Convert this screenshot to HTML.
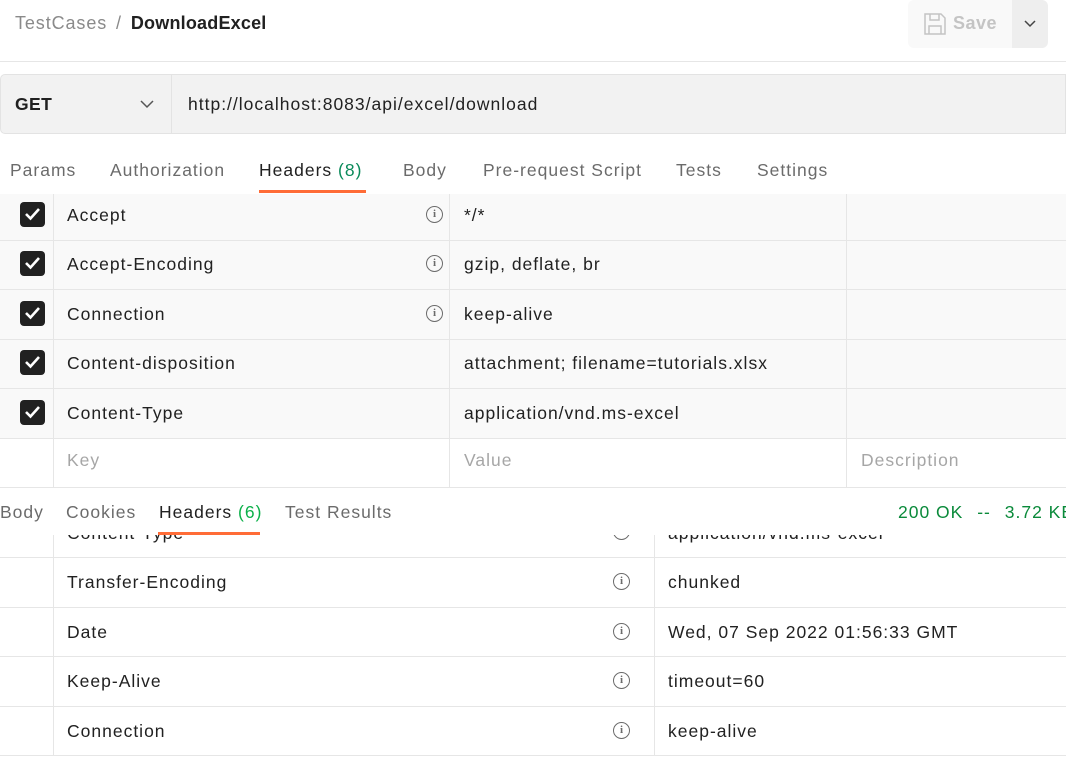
<!DOCTYPE html>
<html><head><style>
*{margin:0;padding:0;box-sizing:border-box}
body{width:1066px;height:775px;overflow:hidden;background:#fff;font-family:"Liberation Sans",sans-serif;color:#212121;font-size:17.5px;letter-spacing:1px;position:relative}
.a{position:absolute;white-space:nowrap}
.g{color:#6b6b6b}
.hl{position:absolute;left:0;width:1066px;height:1px;background:#e6e6e6}
.vl{position:absolute;width:1px;background:#e6e6e6}
.cb{position:absolute;left:20px;width:25px;height:25px;background:#212121;border-radius:4px}
.cb svg{position:absolute;left:4px;top:5px}
.inf{position:absolute;width:17px;height:17px;border:1.5px solid #6b6b6b;border-radius:50%;font-size:11px;line-height:14px;text-align:center;color:#6b6b6b;font-family:"Liberation Serif",serif;font-weight:bold;letter-spacing:0}
</style></head><body>
<div class="a" style="left:15px;top:13px;font-size:18px;color:#8a8a8a;letter-spacing:0.9px">TestCases <span style="margin:0 3px">/</span> <span style="color:#212121;font-weight:bold;letter-spacing:0.2px">DownloadExcel</span></div>
<div class="a" style="left:908px;top:0;width:104px;height:48px;background:#f9f9f9;border-radius:6px 0 0 6px"></div>
<svg class="a" style="left:924px;top:13px" width="22" height="22" viewBox="0 0 22 22" fill="none" stroke="#c4c4c4" stroke-width="1.5"><path d="M1 1h16l4 4v16H1z M6 1v6h9V1 M5 21v-8h12v8"/></svg>
<div class="a" style="left:953px;top:13px;font-size:18px;font-weight:bold;color:#c4c4c4;letter-spacing:0.5px">Save</div>
<div class="a" style="left:1012px;top:0;width:36px;height:48px;background:#eeeeee;border-radius:0 6px 6px 0"></div>
<svg class="a" style="left:1023px;top:18px" width="14" height="10" viewBox="0 0 14 10"><path d="M2 3l5 5 5-5" stroke="#444" stroke-width="1.5" fill="none"/></svg>
<div class="hl" style="top:61px"></div>
<div class="a" style="left:0;top:74px;width:1066px;height:60px;background:#f2f2f2;border:1px solid #e3e3e3;border-radius:5px 0 0 5px"></div>
<div class="vl" style="left:171px;top:75px;height:58px;background:#e3e3e3"></div>
<div class="a" style="left:15px;top:94px;font-weight:bold;letter-spacing:0.4px">GET</div>
<svg class="a" style="left:139px;top:98px" width="16" height="12" viewBox="0 0 16 12"><path d="M2 3l6 6 6-6" stroke="#555" stroke-width="1.5" fill="none"/></svg>
<div class="a" style="left:188px;top:94px">http://localhost:8083/api/excel/download</div>
<div class="a g" style="left:10px;top:160px">Params</div>
<div class="a g" style="left:110px;top:160px">Authorization</div>
<div class="a" style="left:259px;top:160px">Headers <span style="color:#0a8a5a">(8)</span></div>
<div class="a" style="top:190px;width:107px;height:3px;background:#ff6c37;left:259px"></div>
<div class="a g" style="left:403px;top:160px">Body</div>
<div class="a g" style="left:483px;top:160px">Pre-request Script</div>
<div class="a g" style="left:676px;top:160px">Tests</div>
<div class="a g" style="left:757px;top:160px">Settings</div>
<div class="a" style="left:0;top:194px;width:1066px;height:244px;background:#f9f9f9"></div>
<div class="hl" style="top:240px"></div><div class="hl" style="top:289px"></div><div class="hl" style="top:339px"></div><div class="hl" style="top:388px"></div><div class="hl" style="top:438px"></div><div class="hl" style="top:487px"></div>
<div class="vl" style="left:53px;top:194px;height:293px"></div>
<div class="vl" style="left:449px;top:194px;height:293px"></div>
<div class="vl" style="left:846px;top:194px;height:293px"></div>
<div class="cb" style="top:202px"><svg width="17" height="14" viewBox="0 0 17 14"><path d="M2 7l4.5 4.5L15 2" stroke="#fff" stroke-width="2.6" fill="none"/></svg></div>
<div class="cb" style="top:251px"><svg width="17" height="14" viewBox="0 0 17 14"><path d="M2 7l4.5 4.5L15 2" stroke="#fff" stroke-width="2.6" fill="none"/></svg></div>
<div class="cb" style="top:301px"><svg width="17" height="14" viewBox="0 0 17 14"><path d="M2 7l4.5 4.5L15 2" stroke="#fff" stroke-width="2.6" fill="none"/></svg></div>
<div class="cb" style="top:350px"><svg width="17" height="14" viewBox="0 0 17 14"><path d="M2 7l4.5 4.5L15 2" stroke="#fff" stroke-width="2.6" fill="none"/></svg></div>
<div class="cb" style="top:400px"><svg width="17" height="14" viewBox="0 0 17 14"><path d="M2 7l4.5 4.5L15 2" stroke="#fff" stroke-width="2.6" fill="none"/></svg></div>
<div class="a" style="left:67px;top:205px">Accept</div><div class="inf" style="left:426px;top:206px">i</div><div class="a" style="left:464px;top:205px">*/*</div>
<div class="a" style="left:67px;top:254px">Accept-Encoding</div><div class="inf" style="left:426px;top:255px">i</div><div class="a" style="left:464px;top:254px">gzip, deflate, br</div>
<div class="a" style="left:67px;top:304px">Connection</div><div class="inf" style="left:426px;top:305px">i</div><div class="a" style="left:464px;top:304px">keep-alive</div>
<div class="a" style="left:67px;top:353px">Content-disposition</div><div class="a" style="left:464px;top:353px">attachment; filename=tutorials.xlsx</div>
<div class="a" style="left:67px;top:403px">Content-Type</div><div class="a" style="left:464px;top:403px">application/vnd.ms-excel</div>
<div class="a" style="left:67px;top:450px;color:#a6a6a6">Key</div><div class="a" style="left:464px;top:450px;color:#a6a6a6">Value</div><div class="a" style="left:861px;top:450px;color:#a6a6a6">Description</div>
<div class="vl" style="left:53px;top:535px;height:220px"></div>
<div class="vl" style="left:654px;top:535px;height:220px"></div>
<div class="a" style="left:0;top:520px;width:1066px;height:37px;overflow:hidden"><div class="a" style="left:67px;top:3px">Content-Type</div><div class="inf" style="left:613px;top:3px">i</div><div class="a" style="left:668px;top:3px">application/vnd.ms-excel</div></div>
<div class="a" style="left:0;top:488px;width:1066px;height:47px;background:#fff"></div>
<div class="a g" style="left:0;top:502px">Body</div>
<div class="a g" style="left:66px;top:502px">Cookies</div>
<div class="a" style="left:159px;top:502px">Headers <span style="color:#0cb04a">(6)</span></div>
<div class="a" style="left:158px;top:532px;width:102px;height:3px;background:#ff6c37"></div>
<div class="a g" style="left:285px;top:502px">Test Results</div>
<div class="a" style="left:898px;top:502px;color:#0a8a3a">200 OK <span style="margin:0 8px">--</span> 3.72 KB</div>
<div class="hl" style="top:557px"></div><div class="hl" style="top:607px"></div><div class="hl" style="top:656px"></div><div class="hl" style="top:706px"></div><div class="hl" style="top:755px"></div>
<div class="a" style="left:67px;top:572px">Transfer-Encoding</div><div class="inf" style="left:613px;top:573px">i</div><div class="a" style="left:668px;top:572px">chunked</div>
<div class="a" style="left:67px;top:622px">Date</div><div class="inf" style="left:613px;top:623px">i</div><div class="a" style="left:668px;top:622px">Wed, 07 Sep 2022 01:56:33 GMT</div>
<div class="a" style="left:67px;top:671px">Keep-Alive</div><div class="inf" style="left:613px;top:672px">i</div><div class="a" style="left:668px;top:671px">timeout=60</div>
<div class="a" style="left:67px;top:721px">Connection</div><div class="inf" style="left:613px;top:722px">i</div><div class="a" style="left:668px;top:721px">keep-alive</div>
</body></html>
